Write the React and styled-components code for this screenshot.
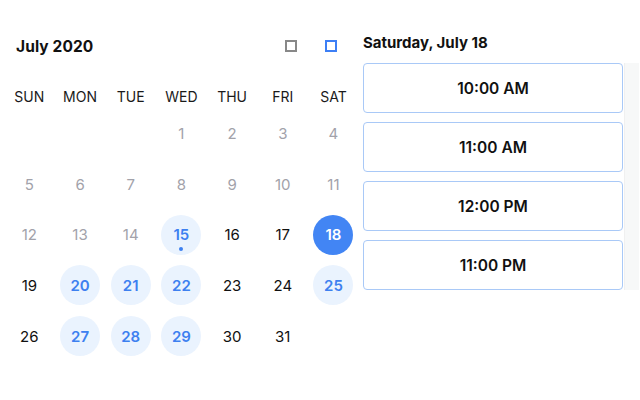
import styled, { createGlobalStyle } from "styled-components";

const GlobalStyle = createGlobalStyle`
    body {
        margin: 0;
        background: #fff;
        font-family: Inter, "Noto Sans", "Liberation Sans", sans-serif;
    }
`;

const Page = styled.div`
    width: 640px;
    height: 400px;
    display: flex;
    box-sizing: border-box;
    overflow: hidden;
`;

const Calendar = styled.section`
    width: 359px;
    padding: 31px 0 0 4px;
    box-sizing: border-box;
`;

const Header = styled.div`
    height: 30px;
    display: flex;
    align-items: center;
    padding-left: 12px;
    padding-right: 22px;
    margin-bottom: 23px;
`;

const Title = styled.h2`
    margin: 0;
    flex: 1;
    font-size: 15.5px;
    font-weight: 700;
    color: #111;
    letter-spacing: 0.1px;
`;

const NavButton = styled.button`
    width: 12px;
    height: 12px;
    padding: 0;
    margin: 0 0 0 ${props => props.$gap || 0}px;
    background: transparent;
    border: 2px solid ${props => props.$active ? "#3d7ff5" : "#888"};
    box-sizing: border-box;
`;

const Grid = styled.div`
    display: grid;
    grid-template-columns: repeat(7, 50.7px);
    grid-auto-rows: 50.7px;
`;

const WeekRow = styled.div`
    display: grid;
    grid-template-columns: repeat(7, 50.7px);
    height: 24px;
`;

const WeekDay = styled.div`
    display: flex;
    align-items: center;
    justify-content: center;
    font-size: 14px;
    color: #1a1a1a;
`;

const DayCell = styled.div`
    display: flex;
    align-items: center;
    justify-content: center;
`;

const Day = styled.div`
    position: relative;
    width: 40px;
    height: 40px;
    border-radius: 50%;
    display: flex;
    align-items: center;
    justify-content: center;
    font-size: 15px;
    font-weight: ${props => (props.$kind === "open" || props.$kind === "selected") ? 600 : 400};
    color: ${props => ({
        past: "#a2a2aa",
        plain: "#111",
        open: "#3d80f0",
        selected: "#fff"
    }[props.$kind])};
    background: ${props => ({
        open: "#eaf3fe",
        selected: "#4285f4"
    }[props.$kind] || "transparent")};
`;

const TodayDot = styled.span`
    position: absolute;
    bottom: 4px;
    left: 50%;
    width: 4px;
    height: 4px;
    margin-left: -2px;
    border-radius: 50%;
    background: #3d80f0;
`;

const Slots = styled.section`
    flex: 1;
    padding-top: 33px;
    padding-left: 4px;
`;

const SlotsTitle = styled.h3`
    margin: 0 0 10px;
    height: 20px;
    line-height: 20px;
    font-size: 15px;
    font-weight: 700;
    color: #111;
`;

const SlotArea = styled.div`
    display: flex;
`;

const SlotList = styled.div`
    width: 260px;
    display: flex;
    flex-direction: column;
    gap: 9px;
`;

const Track = styled.div`
    width: 14px;
    margin-left: 1px;
    background: #f7f8f8;
    border-left: 1px solid #f0f0f0;
`;

const Slot = styled.button`
    height: 50px;
    box-sizing: border-box;
    border: 1px solid #a9c9f7;
    border-radius: 4px;
    background: #fff;
    font-family: inherit;
    font-size: 15.5px;
    font-weight: 600;
    color: #111;
`;

const weekdays = ["SUN", "MON", "TUE", "WED", "THU", "FRI", "SAT"];
const openDays = [15, 20, 21, 22, 25, 27, 28, 29];
const times = ["10:00 AM", "11:00 AM", "12:00 PM", "11:00 PM"];

function kindOf(d) {
    if (d === 18) return "selected";
    if (openDays.includes(d)) return "open";
    if (d < 15) return "past";
    return "plain";
}

export default function App() {
    const cells = [...Array(3).fill(null), ...Array.from({ length: 31 }, (_, i) => i + 1)];
    return (
        <Page>
            <GlobalStyle />
            <Calendar>
                <Header>
                    <Title>July 2020</Title>
                    <NavButton />
                    <NavButton $active $gap={28} />
                </Header>
                <WeekRow>
                    {weekdays.map(w => <WeekDay key={w}>{w}</WeekDay>)}
                </WeekRow>
                <Grid>
                    {cells.map((d, i) => (
                        <DayCell key={i}>
                            {d && (
                                <Day $kind={kindOf(d)}>
                                    {d}
                                    {d === 15 && <TodayDot />}
                                </Day>
                            )}
                        </DayCell>
                    ))}
                </Grid>
            </Calendar>
            <Slots>
                <SlotsTitle>Saturday, July 18</SlotsTitle>
                <SlotArea>
                    <SlotList>
                        {times.map((t, i) => <Slot key={i}>{t}</Slot>)}
                    </SlotList>
                    <Track />
                </SlotArea>
            </Slots>
        </Page>
    );
}
